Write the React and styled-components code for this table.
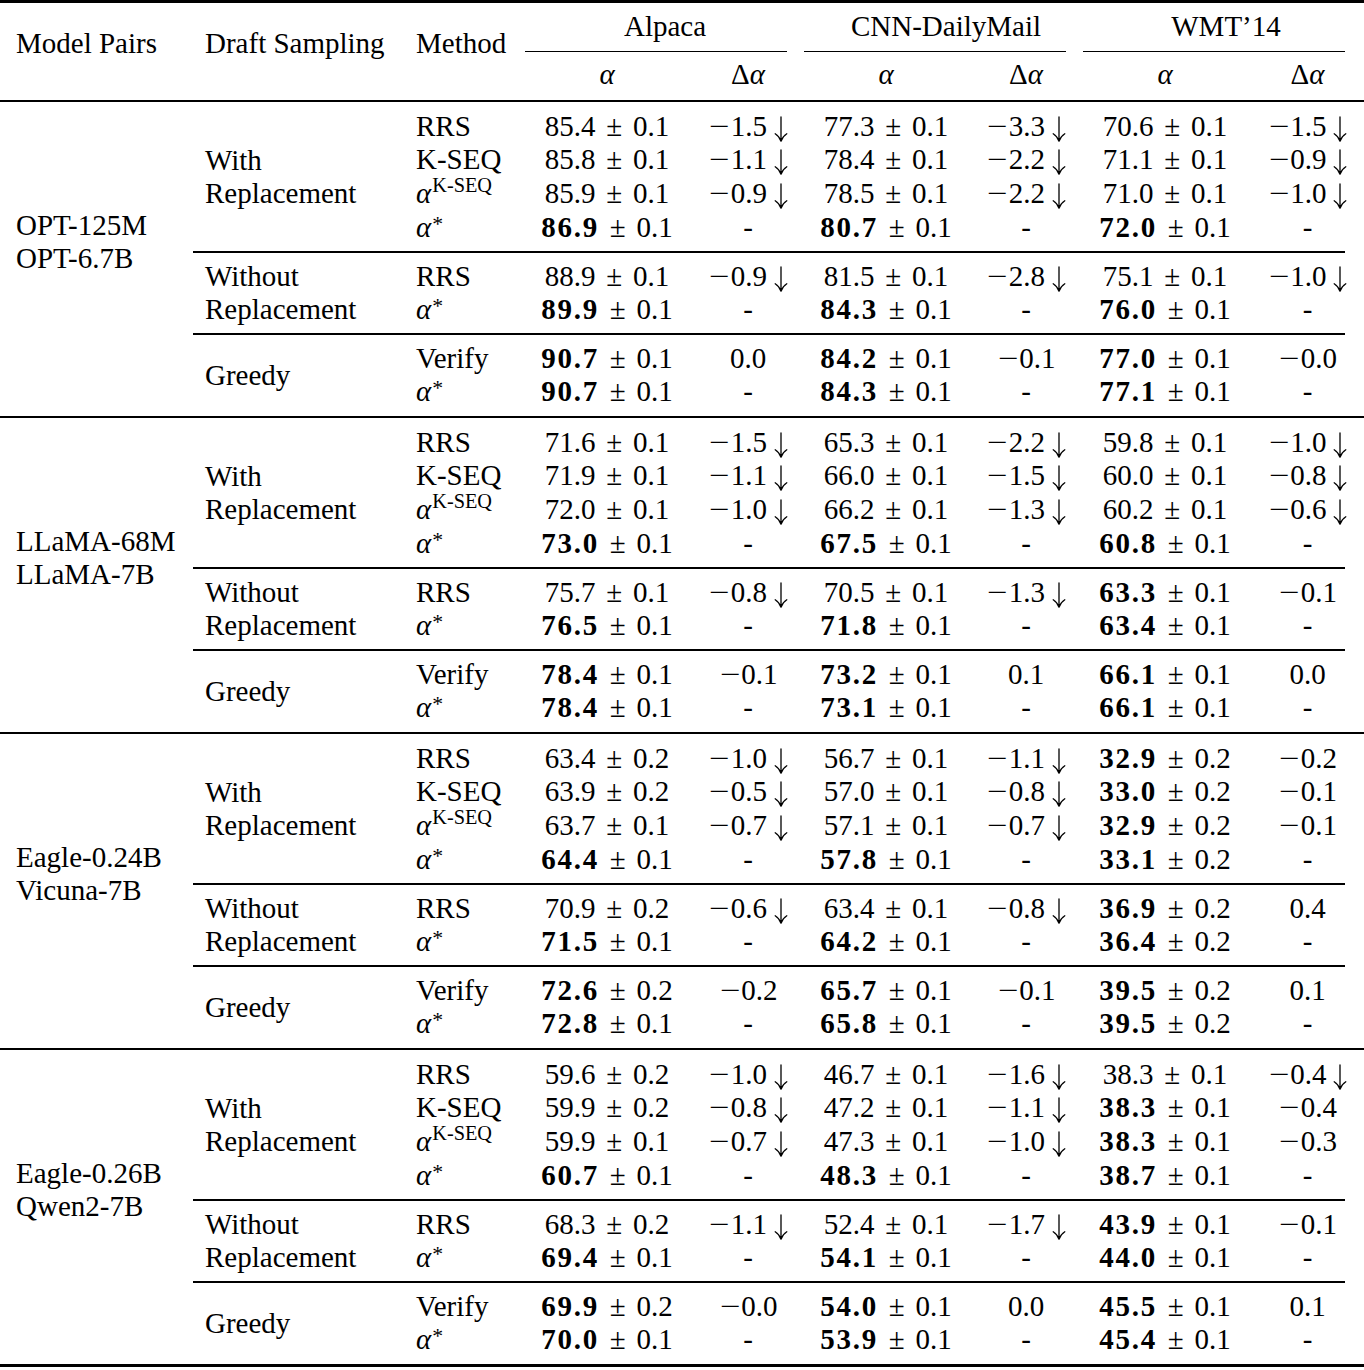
import React from "react";
import styled, { createGlobalStyle } from "styled-components";

const GlobalStyle = createGlobalStyle`
  html, body {
    margin: 0;
    padding: 0;
    background: #fff;
  }
  body {
    font-family: "Liberation Serif", "Times New Roman", serif;
    color: #000;
  }
`;

const COLS = [193, 212, 112, 180, 102, 174, 106, 172, 113];

const DATASETS = [
  { name: "Alpaca", shift: 14, l: 8, r: 12 },
  { name: "CNN-DailyMail", shift: 14, l: 5, r: 13 },
  { name: "WMT\u201914", shift: 9, l: 4, r: 19 },
];

// "*" prefix = bold, "d" suffix = down arrow
const blocks = [
  {
    models: ["OPT-125M", "OPT-6.7B"],
    groups: [
      {
        name: ["With", "Replacement"],
        rows: [
          ["RRS", "85.4 0.1", "-1.5d", "77.3 0.1", "-3.3d", "70.6 0.1", "-1.5d"],
          ["K-SEQ", "85.8 0.1", "-1.1d", "78.4 0.1", "-2.2d", "71.1 0.1", "-0.9d"],
          ["aK", "85.9 0.1", "-0.9d", "78.5 0.1", "-2.2d", "71.0 0.1", "-1.0d"],
          ["a*", "*86.9 0.1", "-", "*80.7 0.1", "-", "*72.0 0.1", "-"],
        ],
      },
      {
        name: ["Without", "Replacement"],
        rows: [
          ["RRS", "88.9 0.1", "-0.9d", "81.5 0.1", "-2.8d", "75.1 0.1", "-1.0d"],
          ["a*", "*89.9 0.1", "-", "*84.3 0.1", "-", "*76.0 0.1", "-"],
        ],
      },
      {
        name: ["Greedy"],
        rows: [
          ["Verify", "*90.7 0.1", "0.0", "*84.2 0.1", "-0.1", "*77.0 0.1", "-0.0"],
          ["a*", "*90.7 0.1", "-", "*84.3 0.1", "-", "*77.1 0.1", "-"],
        ],
      },
    ],
  },
  {
    models: ["LLaMA-68M", "LLaMA-7B"],
    groups: [
      {
        name: ["With", "Replacement"],
        rows: [
          ["RRS", "71.6 0.1", "-1.5d", "65.3 0.1", "-2.2d", "59.8 0.1", "-1.0d"],
          ["K-SEQ", "71.9 0.1", "-1.1d", "66.0 0.1", "-1.5d", "60.0 0.1", "-0.8d"],
          ["aK", "72.0 0.1", "-1.0d", "66.2 0.1", "-1.3d", "60.2 0.1", "-0.6d"],
          ["a*", "*73.0 0.1", "-", "*67.5 0.1", "-", "*60.8 0.1", "-"],
        ],
      },
      {
        name: ["Without", "Replacement"],
        rows: [
          ["RRS", "75.7 0.1", "-0.8d", "70.5 0.1", "-1.3d", "*63.3 0.1", "-0.1"],
          ["a*", "*76.5 0.1", "-", "*71.8 0.1", "-", "*63.4 0.1", "-"],
        ],
      },
      {
        name: ["Greedy"],
        rows: [
          ["Verify", "*78.4 0.1", "-0.1", "*73.2 0.1", "0.1", "*66.1 0.1", "0.0"],
          ["a*", "*78.4 0.1", "-", "*73.1 0.1", "-", "*66.1 0.1", "-"],
        ],
      },
    ],
  },
  {
    models: ["Eagle-0.24B", "Vicuna-7B"],
    groups: [
      {
        name: ["With", "Replacement"],
        rows: [
          ["RRS", "63.4 0.2", "-1.0d", "56.7 0.1", "-1.1d", "*32.9 0.2", "-0.2"],
          ["K-SEQ", "63.9 0.2", "-0.5d", "57.0 0.1", "-0.8d", "*33.0 0.2", "-0.1"],
          ["aK", "63.7 0.1", "-0.7d", "57.1 0.1", "-0.7d", "*32.9 0.2", "-0.1"],
          ["a*", "*64.4 0.1", "-", "*57.8 0.1", "-", "*33.1 0.2", "-"],
        ],
      },
      {
        name: ["Without", "Replacement"],
        rows: [
          ["RRS", "70.9 0.2", "-0.6d", "63.4 0.1", "-0.8d", "*36.9 0.2", "0.4"],
          ["a*", "*71.5 0.1", "-", "*64.2 0.1", "-", "*36.4 0.2", "-"],
        ],
      },
      {
        name: ["Greedy"],
        rows: [
          ["Verify", "*72.6 0.2", "-0.2", "*65.7 0.1", "-0.1", "*39.5 0.2", "0.1"],
          ["a*", "*72.8 0.1", "-", "*65.8 0.1", "-", "*39.5 0.2", "-"],
        ],
      },
    ],
  },
  {
    models: ["Eagle-0.26B", "Qwen2-7B"],
    groups: [
      {
        name: ["With", "Replacement"],
        rows: [
          ["RRS", "59.6 0.2", "-1.0d", "46.7 0.1", "-1.6d", "38.3 0.1", "-0.4d"],
          ["K-SEQ", "59.9 0.2", "-0.8d", "47.2 0.1", "-1.1d", "*38.3 0.1", "-0.4"],
          ["aK", "59.9 0.1", "-0.7d", "47.3 0.1", "-1.0d", "*38.3 0.1", "-0.3"],
          ["a*", "*60.7 0.1", "-", "*48.3 0.1", "-", "*38.7 0.1", "-"],
        ],
      },
      {
        name: ["Without", "Replacement"],
        rows: [
          ["RRS", "68.3 0.2", "-1.1d", "52.4 0.1", "-1.7d", "*43.9 0.1", "-0.1"],
          ["a*", "*69.4 0.1", "-", "*54.1 0.1", "-", "*44.0 0.1", "-"],
        ],
      },
      {
        name: ["Greedy"],
        rows: [
          ["Verify", "*69.9 0.2", "-0.0", "*54.0 0.1", "0.0", "*45.5 0.1", "0.1"],
          ["a*", "*70.0 0.1", "-", "*53.9 0.1", "-", "*45.4 0.1", "-"],
        ],
      },
    ],
  },
];

const Page = styled.div`
  width: 1364px;
`;

const Table = styled.table`
  width: 1364px;
  table-layout: fixed;
  border-collapse: separate;
  border-spacing: 0;
  border-top: 3px solid #000;
  border-bottom: 3px solid #000;
  padding: 0 0 8px;
  font-size: 29px;
  line-height: 33px;
`;

const Col = styled.col`
  width: ${(p) => p.$w}px;
`;

const HeadLabel = styled.th`
  font-weight: normal;
  text-align: left;
  vertical-align: top;
  white-space: nowrap;
  padding: 24px 0 0 ${(p) => p.$indent}px;
`;

const GroupHead = styled.th`
  font-weight: normal;
  vertical-align: top;
  padding: 7px 0 0;
`;

const GroupLabel = styled.div`
  text-align: center;
  white-space: nowrap;
  padding-left: ${(p) => p.$shift}px;
`;

const CRule = styled.div`
  height: 1px;
  background: #000;
  margin: 8px ${(p) => p.$r}px 0 ${(p) => p.$l}px;
`;

const SubHead = styled.th`
  font-weight: normal;
  text-align: center;
  padding: 6px 0 1px;
`;

const Row = styled.tr`
  height: ${(p) => (p.$tall ? 35 : 33)}px;
`;

const ModelCell = styled.td`
  text-align: left;
  vertical-align: middle;
  white-space: nowrap;
  padding: 0 0 34px 16px;
`;

const DraftCell = styled.td`
  text-align: left;
  vertical-align: middle;
  white-space: nowrap;
  padding: 0 0 0 12px;
`;

const MethodCell = styled.td`
  text-align: left;
  white-space: nowrap;
  padding: 0 0 0 11px;
`;

const ValueCell = styled.td`
  text-align: center;
  white-space: nowrap;
  padding: 0;
`;

const RuleCell = styled.td`
  padding: ${(p) => p.$pad}px 0;
`;

const Line = styled.div`
  height: ${(p) => p.$h}px;
  background: #000;
  margin-right: ${(p) => p.$r || 0}px;
`;

const Alpha = styled.span`
  font-style: italic;
`;

const Sup = styled.sup`
  font-size: ${(p) => (p.$star ? 0.75 : 0.7)}em;
  line-height: 0;
  vertical-align: ${(p) => (p.$star ? 0.28 : 0.56)}em;
  margin-left: 1px;
`;

const Bold = styled.b`
  font-weight: bold;
  letter-spacing: 0.06em;
`;

const Pm = styled.span`
  margin: 0 0.37em;
`;

const Minus = styled.span`
  display: inline-block;
  width: 0.78em;
  text-align: center;
  transform: scaleX(1.25);
`;

const ArrowIcon = styled.svg`
  width: 14px;
  height: 26px;
  margin-left: 7px;
  vertical-align: -6px;
  overflow: visible;
`;

const DownArrow = () => (
  <ArrowIcon viewBox="0 0 14 26" aria-label="↓">
    <path
      d="M7 1 V24.5 M1.2 17.8 Q5.2 20.2 7 25.2 Q8.8 20.2 12.8 17.8"
      fill="none"
      stroke="#000"
      strokeWidth="1.3"
      strokeLinecap="round"
      strokeLinejoin="round"
    />
  </ArrowIcon>
);

const Method = ({ m }) => {
  if (m === "aK")
    return (
      <>
        <Alpha>α</Alpha>
        <Sup>K-SEQ</Sup>
      </>
    );
  if (m === "a*")
    return (
      <>
        <Alpha>α</Alpha>
        <Sup $star>*</Sup>
      </>
    );
  return m;
};

const Value = ({ s }) => {
  const [v, e] = s.split(" ");
  const bold = v.startsWith("*");
  const num = bold ? v.slice(1) : v;
  return (
    <>
      {bold ? <Bold>{num}</Bold> : num}
      <Pm>±</Pm>
      {e}
    </>
  );
};

const Delta = ({ s }) => {
  if (s === "-") return "-";
  const down = s.endsWith("d");
  const body = down ? s.slice(0, -1) : s;
  const neg = body.startsWith("-");
  return (
    <>
      {neg && <Minus>−</Minus>}
      {neg ? body.slice(1) : body}
      {down && <DownArrow />}
    </>
  );
};

const Block = ({ block }) => {
  const span = block.groups.reduce((n, g) => n + g.rows.length, 0) + block.groups.length - 1;
  const out = [];
  block.groups.forEach((g, gi) => {
    if (gi > 0) {
      out.push(
        <tr key={`r${gi}`}>
          <RuleCell colSpan={8} $pad={7}>
            <Line $h={2} $r={19} />
          </RuleCell>
        </tr>
      );
    }
    g.rows.forEach((r, ri) => {
      out.push(
        <Row key={`${gi}-${ri}`} $tall={r[0] === "aK"}>
          {gi === 0 && ri === 0 && (
            <ModelCell rowSpan={span}>
              {block.models[0]}
              <br />
              {block.models[1]}
            </ModelCell>
          )}
          {ri === 0 && (
            <DraftCell rowSpan={g.rows.length}>
              {g.name.map((n, i) => (
                <div key={i}>{n}</div>
              ))}
            </DraftCell>
          )}
          <MethodCell>
            <Method m={r[0]} />
          </MethodCell>
          {r.slice(1).map((c, ci) => (
            <ValueCell key={ci}>
              {ci % 2 === 0 ? <Value s={c} /> : <Delta s={c} />}
            </ValueCell>
          ))}
        </Row>
      );
    });
  });
  return <tbody>{out}</tbody>;
};

const FullRule = () => (
  <tbody>
    <tr>
      <RuleCell colSpan={9} $pad={8}>
        <Line $h={2} />
      </RuleCell>
    </tr>
  </tbody>
);

const App = () => (
  <Page>
    <GlobalStyle />
    <Table>
      <colgroup>
        {COLS.map((w, i) => (
          <Col key={i} $w={w} />
        ))}
      </colgroup>
      <thead>
        <tr>
          <HeadLabel rowSpan={2} $indent={16}>Model Pairs</HeadLabel>
          <HeadLabel rowSpan={2} $indent={12}>Draft Sampling</HeadLabel>
          <HeadLabel rowSpan={2} $indent={11}>Method</HeadLabel>
          {DATASETS.map((d) => (
            <GroupHead key={d.name} colSpan={2}>
              <GroupLabel $shift={d.shift}>{d.name}</GroupLabel>
              <CRule $l={d.l} $r={d.r} />
            </GroupHead>
          ))}
        </tr>
        <tr>
          {DATASETS.map((d) => (
            <React.Fragment key={d.name}>
              <SubHead>
                <Alpha>α</Alpha>
              </SubHead>
              <SubHead>
                Δ<Alpha>α</Alpha>
              </SubHead>
            </React.Fragment>
          ))}
        </tr>
      </thead>
      {blocks.map((b) => (
        <React.Fragment key={b.models[0]}>
          <FullRule />
          <Block block={b} />
        </React.Fragment>
      ))}
    </Table>
  </Page>
);

export default App;
